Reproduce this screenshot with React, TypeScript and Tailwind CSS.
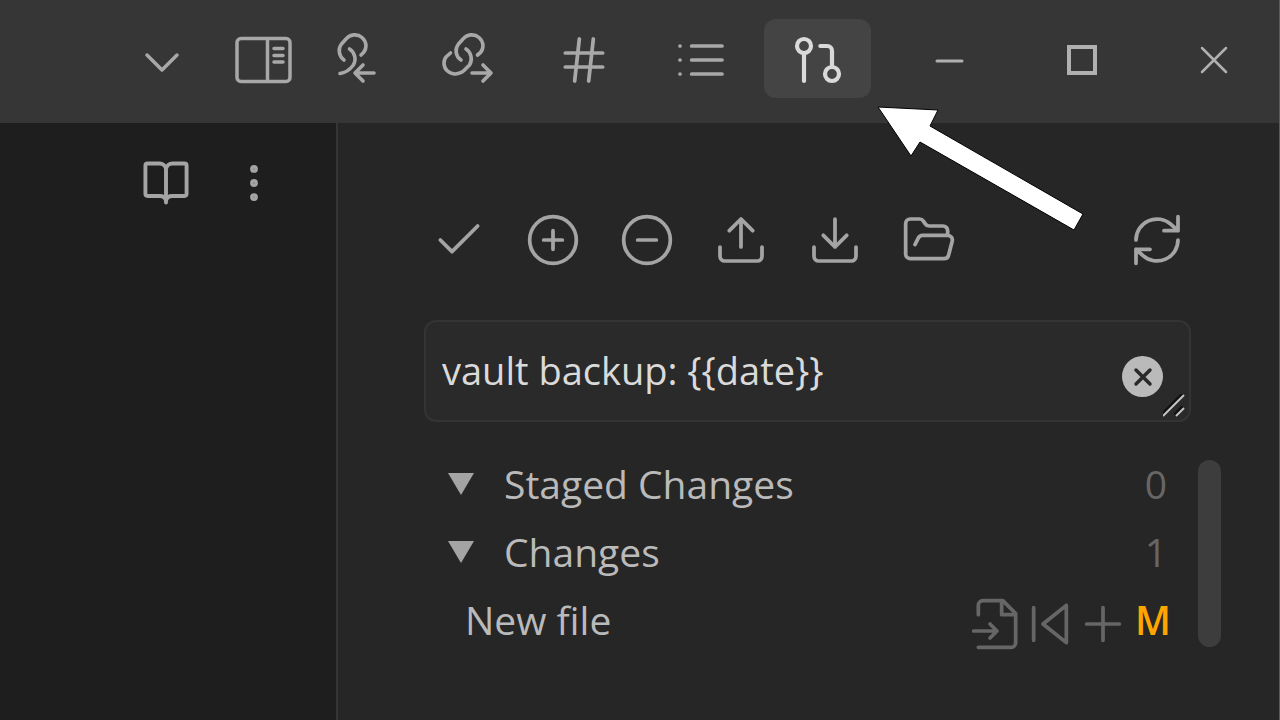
import type { ReactNode } from 'react';

type IconProps = {
	children: ReactNode;
	className?: string;
	box?: number;
	stroke?: number;
};

const Icon = ({ children, className = 'size-14', box = 24, stroke = 1.6 }: IconProps) => (
	<svg
		viewBox={`0 0 ${box} ${box}`}
		className={`shrink-0 ${className}`}
		fill="none"
		stroke="currentColor"
		strokeWidth={stroke}
		strokeLinecap="round"
		strokeLinejoin="round"
		aria-hidden="true"
	>
		{children}
	</svg>
);

const tabs = [
	{
		label: 'Backlinks',
		icon: (
			<Icon box={56} stroke={3.6}>
				<path d="M22 28C17 24.5 15.5 17 19.5 12L24 7C28 2 35.5 1.5 40 5.5C45 10 45 16.5 41.5 20.5L39 23" />
				<path d="M27.5 17C32.5 20 35 27.5 31 33.5C27.5 38 22 41 18 41.5" />
				<path d="M52 41H33M41 33l-8 8 8 8" />
			</Icon>
		),
	},
	{
		label: 'Outgoing links',
		icon: (
			<Icon box={56} stroke={3.6}>
				<path d="M22 28C16.5 24.5 15.5 17 19.5 12L24 7C28 2 35.5 1.5 40 5.5C45 10 45 16.5 41.5 20.5L38.5 23" />
				<path d="M27 17C32 20 34 27.5 30.5 33L25 38.5C20 43 13 43 8.5 39C4 35 4 28 7.5 24.5L11.5 21" />
				<path d="M33 41h18.5M44 33l8 8-8 8" />
			</Icon>
		),
	},
	{
		label: 'Tags',
		icon: (
			<Icon>
				<path d="M4 9h16M4 15h16M10 3 8 21M16 3l-2 18" />
			</Icon>
		),
	},
	{
		label: 'Outline',
		icon: (
			<Icon>
				<path d="M8 6h13M8 12h13M8 18h13M3 6h.01M3 12h.01M3 18h.01" />
			</Icon>
		),
	},
	{
		label: 'Source control',
		active: true,
		icon: (
			<Icon stroke={1.8}>
				<circle cx="18" cy="18" r="3" />
				<circle cx="6" cy="6" r="3" />
				<path d="M13 6h3a2 2 0 0 1 2 2v7M6 9v12" />
			</Icon>
		),
	},
];

const windowControls = [
	{ label: 'Minimize', stroke: 3, icon: <path d="M16 29h25" /> },
	{ label: 'Maximize', stroke: 4, icon: <path strokeLinejoin="miter" d="M16 15h26v26H16z" /> },
	{ label: 'Close', stroke: 2.5, icon: <path d="M17 16l24 24M41 16 17 40" /> },
];

const actions = [
	{ label: 'Commit', icon: <path d="M20 6 9 17l-5-5" /> },
	{
		label: 'Stage all',
		icon: (
			<>
				<circle cx="12" cy="12" r="10" />
				<path d="M12 8v8M8 12h8" />
			</>
		),
	},
	{
		label: 'Unstage all',
		icon: (
			<>
				<circle cx="12" cy="12" r="10" />
				<path d="M8 12h8" />
			</>
		),
	},
	{
		label: 'Push',
		icon: <path d="M21 15v4a2 2 0 0 1-2 2H5a2 2 0 0 1-2-2v-4M17 8l-5-5-5 5M12 3v12" />,
	},
	{
		label: 'Pull',
		icon: <path d="M21 15v4a2 2 0 0 1-2 2H5a2 2 0 0 1-2-2v-4M7 10l5 5 5-5M12 15V3" />,
	},
	{
		label: 'Change layout',
		icon: (
			<path d="m6 14 1.45-2.9A2 2 0 0 1 9.24 10H20a2 2 0 0 1 1.94 2.5l-1.55 6a2 2 0 0 1-1.94 1.5H4a2 2 0 0 1-2-2V5c0-1.1.9-2 2-2h3.93a2 2 0 0 1 1.66.9l.82 1.2a2 2 0 0 0 1.66.9H18a2 2 0 0 1 2 2v2" />
		),
	},
];

const groups = [
	{ name: 'Staged Changes', count: 0 },
	{ name: 'Changes', count: 1 },
];

const TitleBar = () => (
	<header className="flex h-[123px] shrink-0 items-start justify-end bg-[#363636] text-[#a8a8a8]">
		<div className="flex h-[120px] items-center">
			<button type="button" aria-label="Tab list" className="flex w-[136px] justify-center">
				<Icon box={56} stroke={3.5}>
					<path d="M13 23l15 15 15-15" />
				</Icon>
			</button>
			<button type="button" aria-label="Toggle sidebar" className="flex w-[66px] justify-center">
				<Icon box={60} stroke={3.5} className="size-[60px]">
					<rect x="4" y="8.5" width="53" height="43" rx="4" />
					<path d="M34.5 9v42M41 18.5h9M41 25.5h9M41 32h9" />
				</Icon>
			</button>
		</div>
		<nav className="flex gap-[10px] pt-[19px]">
			{tabs.map((tab) => (
				<button
					key={tab.label}
					type="button"
					aria-label={tab.label}
					className={`flex h-[79px] w-[107px] items-center justify-center rounded-xl pt-[3px] ${
						tab.active ? 'bg-[#444444] text-[#dadada]' : ''
					}`}
				>
					{tab.icon}
				</button>
			))}
		</nav>
		<div className="ml-3 flex h-[120px] items-center">
			{windowControls.map((control) => (
				<button
					key={control.label}
					type="button"
					aria-label={control.label}
					className="flex w-[132px] justify-center text-[#b0b0b0]"
				>
					<Icon box={56} stroke={control.stroke}>
						{control.icon}
					</Icon>
				</button>
			))}
		</div>
	</header>
);

const CommitMessage = () => (
	<div className="relative mt-[52px] mr-[30px]">
		<textarea
			aria-label="Commit message"
			defaultValue="vault backup: {{date}}"
			rows={1}
			className="block h-[102px] w-full resize-none overflow-hidden rounded-xl border-2 border-[#343434] bg-[#2a2a2a] pt-[23px] pr-20 pl-4 text-[38px] leading-[50px] text-[#dadada] outline-none"
		/>
		<button
			type="button"
			aria-label="Clear"
			className="absolute top-9 right-7 flex size-[41px] items-center justify-center rounded-full bg-[#bababa] text-[#2a2a2a]"
		>
			<Icon className="size-10" box={40} stroke={3.5}>
				<path d="M13 13l14 14M27 13 13 27" />
			</Icon>
		</button>
		<svg viewBox="0 0 24 24" className="absolute right-1 bottom-1 size-6" aria-hidden="true">
			<path d="M-1 21 20 0M12 21l8-8" stroke="#111111" strokeWidth="4" />
			<path d="M0 22 21 1M13 22l8-8" stroke="#c4c4c4" strokeWidth="2" />
		</svg>
	</div>
);

const ChangeList = () => (
	<div className="mt-7 flex">
		<div className="min-w-0 flex-1 text-[39px] leading-[68px] text-[#bababa]">
			{groups.map((group) => (
				<div key={group.name} className="flex h-[68px] items-center px-6">
					<button type="button" className="flex items-center gap-[30px]">
						<svg viewBox="0 0 26 22" className="h-[22px] w-[26px]" fill="#a4a4a4" aria-hidden="true">
							<path d="M0 0h26L13 22z" />
						</svg>
						{group.name}
					</button>
					<span className="ml-auto text-[#666666]">{group.count}</span>
				</div>
			))}
			<div className="flex h-[68px] items-center pr-5 pl-[41px]">
				<span>New file</span>
				<div className="ml-auto flex items-center pt-2 text-[#666666]">
					<button type="button" aria-label="Open file" className="-mr-[3px]">
						<Icon>
							<path d="M4 22h14a2 2 0 0 0 2-2V7.5L14.5 2H6a2 2 0 0 0-2 2v4M14 2v6h6M2 15h10M9 18l3-3-3-3" />
						</Icon>
					</button>
					<button type="button" aria-label="Discard" className="-mr-[3px]">
						<Icon>
							<path d="M19 20 9 12l10-8zM5 19V5" />
						</Icon>
					</button>
					<button type="button" aria-label="Stage">
						<Icon>
							<path d="M12 5v14M5 12h14" />
						</Icon>
					</button>
				</div>
				<span className="ml-1 font-semibold text-[#ffa500]">M</span>
			</div>
		</div>
		<div className="mt-[10px] ml-[7px] h-[187px] w-[23px] rounded-full bg-[#3d3d3d]" />
	</div>
);

const App = () => (
	<div className="relative flex min-h-screen flex-col border-r border-[#5a5a5a] bg-[#262626] font-['Open_Sans',sans-serif]">
		<TitleBar />
		<div className="flex flex-1">
			<aside className="flex w-[338px] shrink-0 items-start gap-9 border-r-2 border-[#363636] bg-[#1e1e1e] pt-[34px] pl-[140px] text-[#a4a4a4]">
				<button type="button" aria-label="Reading view">
					<Icon className="size-[52px]" stroke={1.8}>
						<path d="M3.5 3H9a3 3 0 0 1 3 2.5A3 3 0 0 1 15 3h5.5A1 1 0 0 1 21.5 4v13a1 1 0 0 1-1 1H15a3 3 0 0 0-3 2 3 3 0 0 0-3-2H3.5a1 1 0 0 1-1-1V4a1 1 0 0 1 1-1zM12 5.5V21" />
					</Icon>
				</button>
				<button type="button" aria-label="More options">
					<Icon className="size-[52px]" stroke={1.6}>
						<circle cx="12" cy="5.5" r="1" />
						<circle cx="12" cy="12" r="1" />
						<circle cx="12" cy="18.5" r="1" />
					</Icon>
				</button>
			</aside>
			<main className="min-w-0 flex-1 pt-[89px] pr-[58px] pl-[86px]">
				<div className="flex gap-[38px] pr-[36px] pl-[7px] text-[#a4a4a4]">
					{actions.map((action) => (
						<button key={action.label} type="button" aria-label={action.label}>
							<Icon>{action.icon}</Icon>
						</button>
					))}
					<button type="button" aria-label="Refresh" className="ml-auto">
						<Icon>
							<path d="M21 2v6h-6M3 12a9 9 0 0 1 15-6.7L21 8M3 22v-6h6M21 12a9 9 0 0 1-15 6.7L3 16" />
						</Icon>
					</button>
				</div>
				<CommitMessage />
				<ChangeList />
			</main>
		</div>

		{/* callout arrow pointing at the source control tab */}
		<svg
			viewBox="0 0 208 126"
			className="pointer-events-none absolute top-[106px] right-[194px] h-[126px] w-[208px]"
			aria-hidden="true"
		>
			<path
				d="M1 1 61 4 53 20 206 108 197 124 43 36 34 50z"
				fill="#ffffff"
				stroke="#000000"
				strokeWidth="1"
			/>
		</svg>
	</div>
);

export default App;
